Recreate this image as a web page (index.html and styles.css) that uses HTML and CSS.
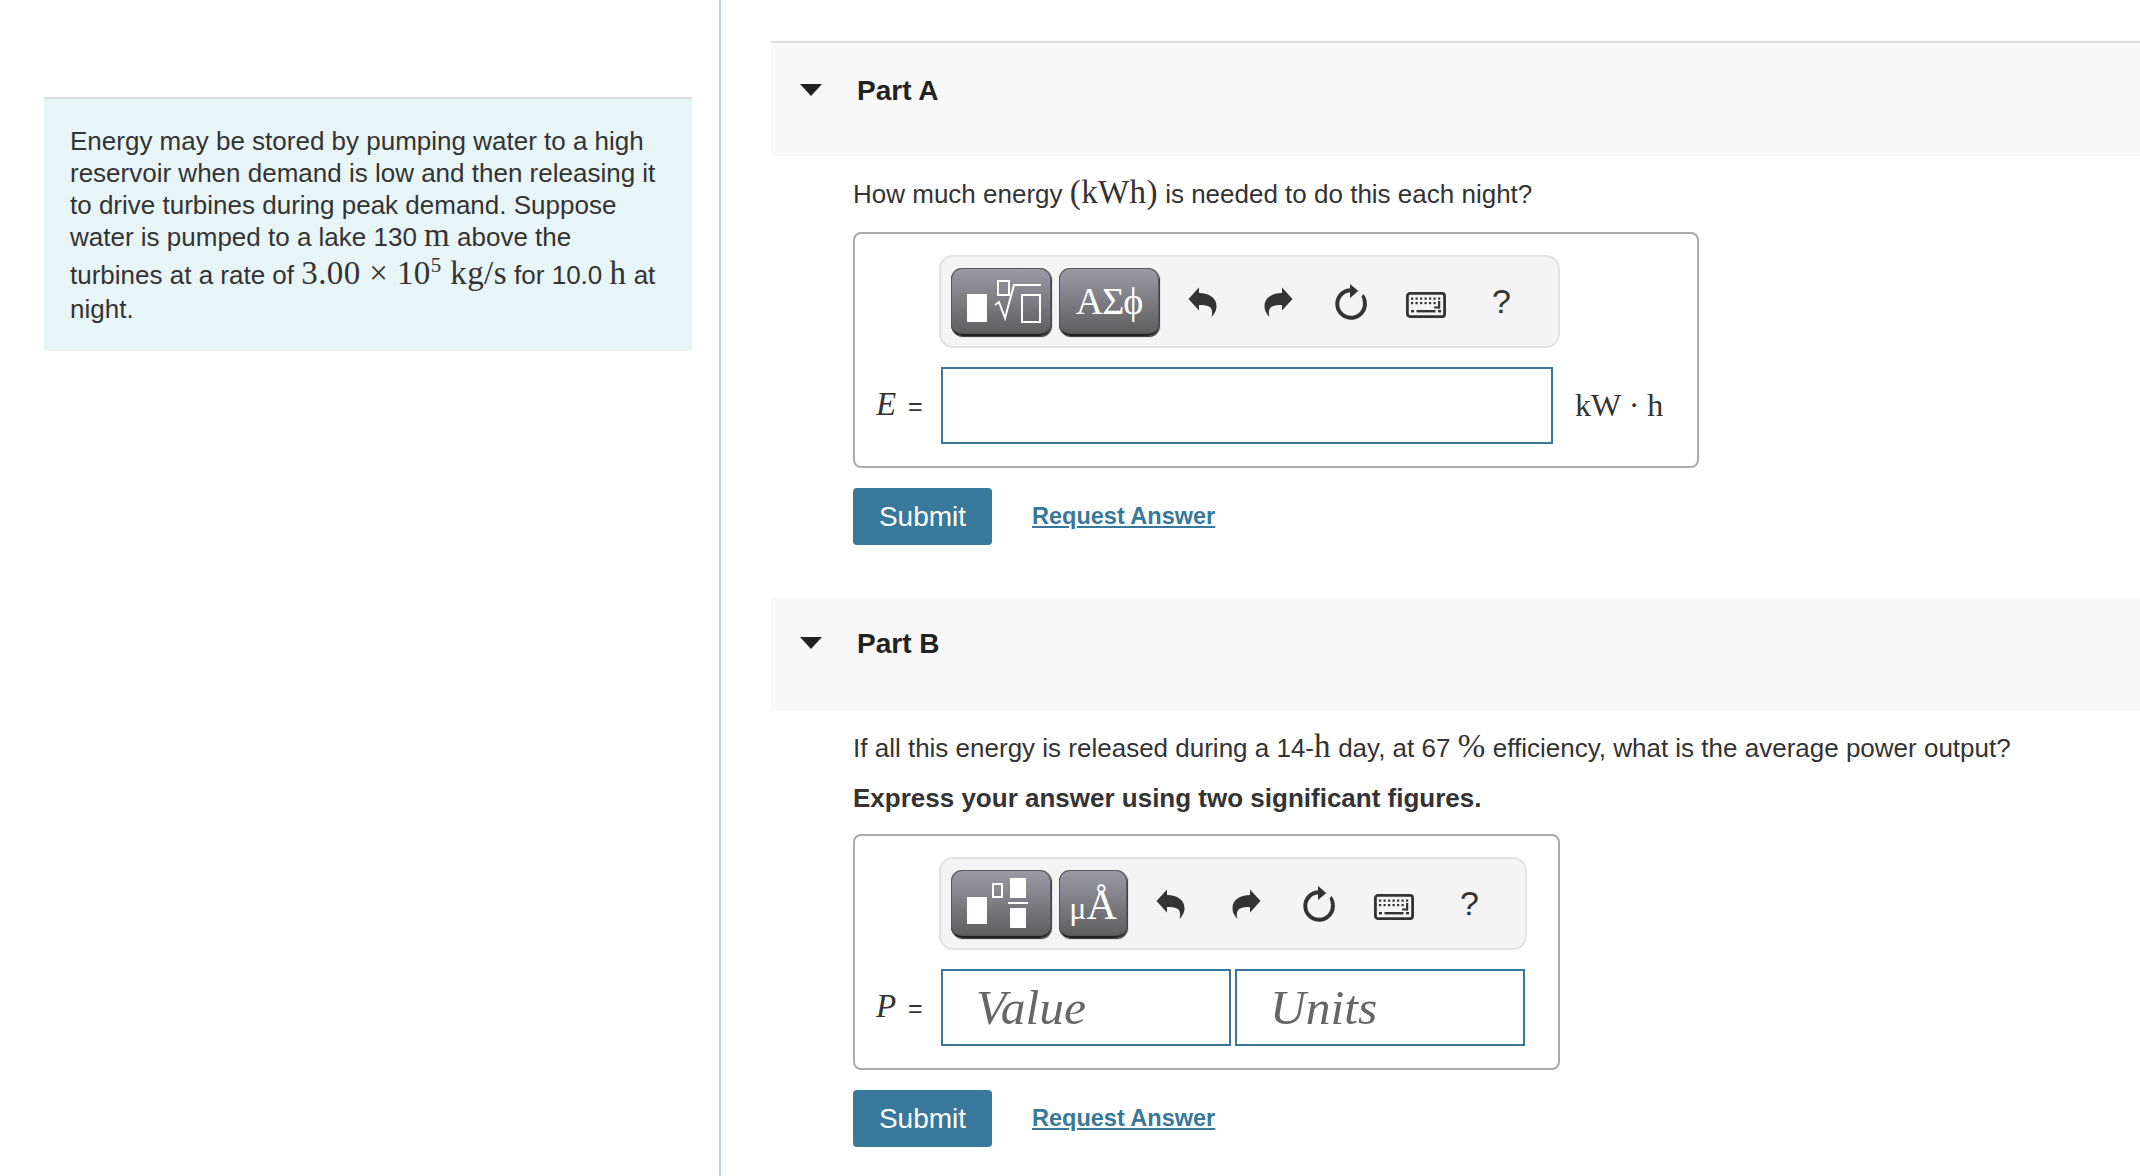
FILE: index.html
```html
<!DOCTYPE html>
<html lang="en">
<head>
<meta charset="utf-8">
<title>Pumped storage</title>
<link rel="stylesheet" href="styles.css">
</head>
<body>
<svg class="defs" width="0" height="0" aria-hidden="true">
  <symbol id="i-undo" viewBox="0 0 30 30"><path d="M0.5 12 L11 0.5 V6 C21 6 29 11 28.5 20 C28.3 24 26 27.5 23.5 30 C25 25 24 21 21 19.5 C18 18 15 18 11 18 V23.5 Z"/></symbol>
  <symbol id="i-redo" viewBox="0 0 30 30"><path d="M29.5 12 L19 0.5 V6 C9 6 1 11 1.5 20 C1.7 24 4 27.5 6.5 30 C5 25 6 21 9 19.5 C12 18 15 18 19 18 V23.5 Z"/></symbol>
  <symbol id="i-reset" viewBox="0 0 36 38">
    <path class="ring" d="M17 7.2 A13.8 13.8 0 1 0 31.75 19"/>
    <path d="M17 1 L25.3 8 L17 15 Z"/>
    <path d="M33.7 19 C33.5 16 32.5 13.5 30.5 11 L28.5 13.5 C29.3 15 29.7 17 29.8 19 Z"/>
  </symbol>
  <symbol id="i-keys" viewBox="0 0 40 26">
    <rect class="frame" x="1.4" y="1.4" width="37.2" height="23.2" rx="2.5"/>
    <g class="dots">
      <rect x="5" y="5.5" width="2.2" height="2.2"/><rect x="9.5" y="5.5" width="2.2" height="2.2"/><rect x="14" y="5.5" width="2.2" height="2.2"/><rect x="18.5" y="5.5" width="2.2" height="2.2"/><rect x="23" y="5.5" width="2.2" height="2.2"/><rect x="27.5" y="5.5" width="2.2" height="2.2"/><rect x="32" y="5.5" width="2.2" height="2.2"/>
      <rect x="5" y="10" width="2.2" height="2.2"/><rect x="9.5" y="10" width="2.2" height="2.2"/><rect x="14" y="10" width="2.2" height="2.2"/><rect x="18.5" y="10" width="2.2" height="2.2"/><rect x="23" y="10" width="2.2" height="2.2"/><rect x="27.5" y="10" width="2.2" height="2.2"/><rect x="32" y="9" width="2.2" height="7.5"/><rect x="28" y="14.5" width="6" height="2"/>
      <rect x="5" y="18" width="3" height="2.4"/><rect x="10.5" y="18" width="19" height="2.4"/><rect x="32" y="18" width="3" height="2.4"/>
    </g>
  </symbol>
</svg>

<div class="page">
  <aside class="left">
    <div class="intro">
      <p>Energy may be stored by pumping water to a high reservoir when demand is low and then releasing it to drive turbines during peak demand. Suppose water is pumped to a lake 130 <span class="m wide-m">m</span> above the turbines at a rate of <span class="m big tall">3.00 × 10<sup>5</sup> kg/s</span> for 10.0 <span class="m big">h</span> at night.</p>
    </div>
  </aside>

  <main class="right">
    <section class="part part-a">
      <header class="part-head">
        <span class="tri"></span>
        <h2>Part A</h2>
      </header>
      <div class="part-body">
        <p class="q">How much energy <span class="m big">(kWh)</span> is needed to do this each night?</p>
        <div class="answer answer-a">
          <div class="toolbar">
            <button class="tbtn" type="button" aria-label="Templates">
              <svg viewBox="0 0 100 68" width="100" height="68">
                <rect class="w" x="16" y="26" width="20" height="28"/>
                <rect class="o" x="47" y="13" width="11" height="14"/>
                <path class="o" d="M44 37 L48 34 L54 50 L63 17 H90"/>
                <rect class="o" x="71" y="27" width="18" height="27"/>
              </svg>
            </button>
            <button class="tbtn glyph" type="button">ΑΣϕ</button>
            <div class="tools">
              <svg class="ic undo"><use href="#i-undo"/></svg>
              <svg class="ic redo"><use href="#i-redo"/></svg>
              <svg class="ic reset"><use href="#i-reset"/></svg>
              <svg class="ic keys"><use href="#i-keys"/></svg>
              <span class="help">?</span>
            </div>
          </div>
          <div class="row">
            <span class="label"><i>E</i> =</span>
            <input class="field wide" type="text" aria-label="E">
            <span class="unit">kW · h</span>
          </div>
        </div>
        <div class="actions">
          <button class="submit" type="button">Submit</button>
          <a class="req" href="#">Request Answer</a>
        </div>
      </div>
    </section>

    <section class="part part-b">
      <header class="part-head">
        <span class="tri"></span>
        <h2>Part B</h2>
      </header>
      <div class="part-body">
        <p class="q">If all this energy is released during a 14-<span class="m big">h</span> day, at 67 <span class="m big">%</span> efficiency, what is the average power output?</p>
        <p class="note">Express your answer using two significant figures.</p>
        <div class="answer answer-b">
          <div class="toolbar">
            <button class="tbtn" type="button" aria-label="Templates">
              <svg viewBox="0 0 100 68" width="100" height="68">
                <rect class="w" x="16" y="27" width="20" height="27"/>
                <rect class="o" x="42" y="14" width="9" height="13"/>
                <rect class="w" x="59" y="8" width="16" height="20"/>
                <rect class="w" x="57" y="32" width="20" height="2"/>
                <rect class="w" x="59" y="38" width="16" height="20"/>
              </svg>
            </button>
            <button class="tbtn glyph small" type="button"><span class="mu">μ</span>Å</button>
            <div class="tools">
              <svg class="ic undo"><use href="#i-undo"/></svg>
              <svg class="ic redo"><use href="#i-redo"/></svg>
              <svg class="ic reset"><use href="#i-reset"/></svg>
              <svg class="ic keys"><use href="#i-keys"/></svg>
              <span class="help">?</span>
            </div>
          </div>
          <div class="row">
            <span class="label"><i>P</i> =</span>
            <input class="field half" type="text" placeholder="Value" aria-label="Value">
            <input class="field half" type="text" placeholder="Units" aria-label="Units">
          </div>
        </div>
        <div class="actions">
          <button class="submit" type="button">Submit</button>
          <a class="req" href="#">Request Answer</a>
        </div>
      </div>
    </section>
  </main>
</div>
</body>
</html>
```

FILE: styles.css
```css
* { box-sizing: border-box; }
html, body { margin: 0; padding: 0; }
body {
  width: 2140px;
  height: 1176px;
  overflow: hidden;
  background: #fff;
  color: #333;
  font-family: "Liberation Sans", Arial, sans-serif;
  font-size: 26px;
  line-height: 32px;
}
.defs { display: block; height: 0; }
.page { display: flex; height: 1176px; }

.left {
  flex: 0 0 721px;
  border-right: 2px solid #c2d0e2;
  padding: 97px 27px 0 44px;
}
.intro {
  background: #e8f5f6;
  border-top: 2px solid #dddddd;
  padding: 26px 24px 26px 26px;
}
.intro p { margin: 0; }
.m { font-family: "Liberation Serif", "Times New Roman", serif; line-height: 0; }
.big { font-size: 33px; letter-spacing: 0.4px; }
.wide-m { font-size: 33px; }
.tall { display: inline-block; line-height: 40px; }
sup { font-size: 21px; line-height: 0; }

.right { flex: 1; padding: 41px 0 0 50px; min-width: 0; }
.part-head {
  display: flex;
  align-items: flex-start;
  height: 115px;
  padding: 32px 0 0 29px;
  background: #f9f9f9;
}
.part-a .part-head { border-top: 2px solid #dddddd; }
.part-b .part-head { height: 114px; padding-top: 31px; }
.tri {
  width: 0;
  height: 0;
  margin-top: 9px;
  border-left: 11px solid transparent;
  border-right: 11px solid transparent;
  border-top: 12px solid #222;
}
.part-head h2 {
  margin: 0 0 0 35px;
  font-size: 28px;
  line-height: 32px;
  font-weight: 700;
  color: #222;
}
.part-body { padding: 22px 0 0 82px; }
.q { margin: 0; white-space: nowrap; }
.note { margin: 18px 0 0; font-weight: 700; white-space: nowrap; }

.answer {
  margin-top: 22px;
  border: 2px solid #aaaaaa;
  border-radius: 8px;
  padding: 21px 0 0 84px;
  height: 236px;
}
.answer-a { width: 846px; }
.answer-b { width: 707px; margin-top: 20px; }

.toolbar {
  display: flex;
  align-items: center;
  height: 93px;
  padding-left: 10px;
  background: #f4f4f4;
  border: 2px solid #e2e2e2;
  border-radius: 14px;
  gap: 8px;
}
.answer-a .toolbar { width: 621px; }
.answer-b .toolbar { width: 588px; }
.tbtn {
  flex: none;
  width: 100px;
  height: 68px;
  padding: 0;
  background: linear-gradient(#9c9ba6, #5e5e5e);
  border: 0;
  border-bottom: 2px solid #222;
  border-radius: 11px;
  box-shadow: inset 0 0 0 1px #55555a, 1px 1px 1px #333;
  color: #fff;
  overflow: hidden;
}
.tbtn svg { display: block; }
.tbtn .w { fill: #fff; }
.tbtn .o { fill: none; stroke: #fff; stroke-width: 2; }
.glyph {
  font-family: "Liberation Serif", "Times New Roman", serif;
  font-size: 38px;
  line-height: 60px;
  letter-spacing: -1px;
}
.glyph.small { width: 68px; font-size: 42px; line-height: 70px; letter-spacing: 0; }
.mu { font-size: 32px; }

.tools { display: flex; align-items: center; color: #333; margin-left: 21px; }
.ic { fill: #333; display: block; }
.ic.undo { width: 30px; height: 30px; }
.ic.redo { width: 30px; height: 30px; margin-left: 45px; }
.ic.reset { width: 36px; height: 38px; margin-left: 40px; }
.ic.keys { width: 40px; height: 26px; margin-left: 37px; margin-top: 6px; }
.ring { fill: none; stroke: #333; stroke-width: 4; }
.frame { fill: none; stroke: #333; stroke-width: 2.8; }
.help { margin-left: 46px; font-size: 34px; line-height: 36px; margin-top: -2px; }

.row { display: flex; align-items: center; margin-top: 19px; }
.label {
  margin-left: -63px;
  margin-bottom: 2px;
  width: 65px;
  flex: none;
  font-family: "Liberation Sans", Arial, sans-serif;
  font-size: 25px;
  white-space: nowrap;
}
.label i {
  display: inline-block;
  min-width: 25px;
  font-family: "Liberation Serif", "Times New Roman", serif;
  font-size: 33px;
}
.field {
  display: block;
  flex: none;
  height: 77px;
  padding: 0 0 0 33px;
  border: 2px solid #37789b;
  border-radius: 0;
  background: #fff;
  font-family: "Liberation Serif", "Times New Roman", serif;
  font-style: italic;
  font-size: 49.5px;
  outline: 0;
}
.field::placeholder { color: #666; opacity: 1; }
.field.wide { width: 612px; }
.field.half { width: 290px; }
.field.half + .field.half { margin-left: 4px; }
.unit {
  margin-left: 22px;
  margin-bottom: 2px;
  font-family: "Liberation Serif", "Times New Roman", serif;
  font-size: 32px;
  white-space: nowrap;
}

.actions { display: flex; align-items: center; margin-top: 20px; }
.submit {
  width: 139px;
  height: 57px;
  padding: 0;
  border: 0;
  border-radius: 4px;
  background: #37789b;
  color: #fff;
  font-family: "Liberation Sans", Arial, sans-serif;
  font-size: 28px;
}
.req {
  margin-left: 40px;
  color: #37789b;
  font-size: 23.5px;
  font-weight: 700;
  text-decoration: underline;
  position: relative;
  top: -1px;
}
.part-b { margin-top: 52px; }
.part-b .part-body { padding-top: 21px; }
```
